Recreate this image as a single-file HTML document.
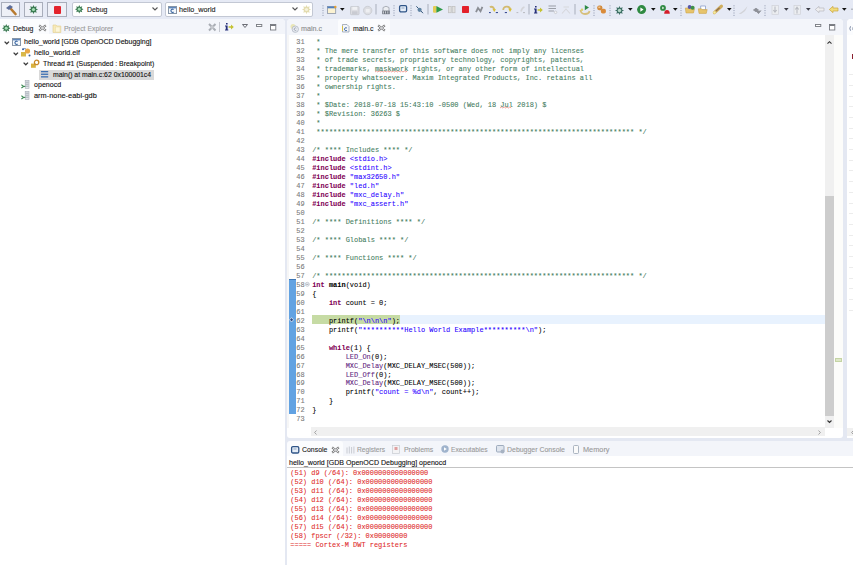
<!DOCTYPE html><html><head><meta charset="utf-8"><style>
*{margin:0;padding:0;box-sizing:border-box}
html,body{width:853px;height:565px;overflow:hidden}
body{position:relative;background:#e4e8f2;font-family:"Liberation Sans",sans-serif;font-size:8px;color:#1a1a1a}
.a{position:absolute}
.t{position:absolute;white-space:pre;line-height:10px;height:10px;transform-origin:0 0;-webkit-text-stroke:0.12px currentColor}
.m{position:absolute;white-space:pre;font-family:"Liberation Mono",monospace;font-size:6.97px;line-height:9px;height:9px;-webkit-text-stroke:0.08px currentColor}
.cm{color:#437c5e}
.kw{color:#7f0055;font-weight:bold}
.st{color:#2a00ff}
.fn{color:#642880}
.ln{color:#787878}
svg{overflow:visible}
</style></head><body>
<div class="a" style="left:0px;top:0px;width:853px;height:19px;background:#e6eaf5;"></div>
<div class="a" style="left:1px;top:2px;width:19px;height:15px;background:#eef0f7;border:1px solid #a9aebb"></div>
<div class="a" style="left:24px;top:2px;width:19px;height:15px;background:#eef0f7;border:1px solid #a9aebb"></div>
<div class="a" style="left:47px;top:2px;width:20px;height:15px;background:#eef0f7;border:1px solid #a9aebb"></div>
<svg class="a" style="left:4px;top:3px;" width="12" height="12" viewBox="0 0 12 12"><path d="M7 6 L11.5 11" stroke="#b87a30" stroke-width="2.6" stroke-linecap="round"/><path d="M2 5 L6 2 L9 4 L5 7 Z" fill="#5d6e9a"/></svg>
<svg class="a" style="left:29px;top:5px;" width="9" height="9" viewBox="0 0 9 9"><polygon points="9.00,4.50 6.99,5.53 7.68,7.68 5.53,6.99 4.50,9.00 3.47,6.99 1.32,7.68 2.01,5.53 0.00,4.50 2.01,3.47 1.32,1.32 3.47,2.01 4.50,0.00 5.53,2.01 7.68,1.32 6.99,3.47" fill="#3b7a52"/><circle cx="4.5" cy="4.5" r="1.57" fill="#a5e0b5"/></svg>
<div class="a" style="left:54px;top:6px;width:7px;height:8px;background:#e3232c;border-radius:1px"></div>
<div class="a" style="left:72px;top:2px;width:90px;height:15px;background:#ffffff;border:1px solid #c3c8d4;border-radius:2px"></div>
<svg class="a" style="left:75px;top:5px;" width="8.5" height="8.5" viewBox="0 0 8.5 8.5"><polygon points="8.50,4.25 6.61,5.23 7.26,7.26 5.23,6.61 4.25,8.50 3.27,6.61 1.24,7.26 1.89,5.23 0.00,4.25 1.89,3.27 1.24,1.24 3.27,1.89 4.25,0.00 5.23,1.89 7.26,1.24 6.61,3.27" fill="#3b7a52"/><circle cx="4.25" cy="4.25" r="1.49" fill="#a5e0b5"/></svg>
<svg class="a" style="left:152px;top:7px;" width="6" height="4" viewBox="0 0 6 4"><path d="M0.5 0.5 L3 3 L5.5 0.5" stroke="#555" stroke-width="1.1" fill="none"/></svg>
<div class="a" style="left:165px;top:2px;width:148px;height:15px;background:#ffffff;border:1px solid #c3c8d4;border-radius:2px"></div>
<svg class="a" style="left:167.9px;top:5.5px;" width="9" height="8" viewBox="0 0 9 8"><rect x="0.5" y="0.5" width="8" height="7" fill="#f4f8fc" stroke="#8796a8"/><rect x="1" y="1" width="7" height="1.4" fill="#5f86bb"/><path d="M5.6 3.6 A1.6 1.6 0 1 0 5.6 6" stroke="#3d68a3" stroke-width="1.1" fill="none"/></svg>
<svg class="a" style="left:291.5px;top:7px;" width="6" height="4" viewBox="0 0 6 4"><path d="M0.5 0.5 L3 3 L5.5 0.5" stroke="#555" stroke-width="1.1" fill="none"/></svg>
<svg class="a" style="left:302px;top:5px;" width="9" height="9" viewBox="0 0 9 9"><polygon points="9.00,4.50 6.99,5.53 7.68,7.68 5.53,6.99 4.50,9.00 3.47,6.99 1.32,7.68 2.01,5.53 0.00,4.50 2.01,3.47 1.32,1.32 3.47,2.01 4.50,0.00 5.53,2.01 7.68,1.32 6.99,3.47" fill="#e3dcb0"/><circle cx="4.5" cy="4.5" r="1.57" fill="#f6f2dc"/></svg>
<svg class="a" style="left:321.6px;top:4.5px" width="2" height="10" viewBox="0 0 2 10"><rect x="0.5" y="0.3" width="1" height="1" fill="#8f97b0"/><rect x="0.5" y="2.7" width="1" height="1" fill="#8f97b0"/><rect x="0.5" y="5.1" width="1" height="1" fill="#8f97b0"/><rect x="0.5" y="7.5" width="1" height="1" fill="#8f97b0"/><rect x="0.5" y="9.9" width="1" height="1" fill="#8f97b0"/></svg>
<svg class="a" style="left:327px;top:6px" width="9.5" height="8" viewBox="0 0 9.5 8"><rect x="0.5" y="0.5" width="8.2" height="7" fill="#fbf2d2" stroke="#8a94a6" stroke-width="0.8"/><rect x="0.5" y="0.5" width="8.2" height="1.8" fill="#4f7fc0"/><circle cx="8.3" cy="1" r="1.2" fill="#e8a030"/></svg>
<svg class="a" style="left:340.3px;top:8px" width="5" height="3" viewBox="0 0 5 3"><path d="M0 0 H4.6 L2.3 2.7 Z" fill="#111"/></svg>
<svg class="a" style="left:349.5px;top:5.5px" width="9.5" height="9" viewBox="0 0 9.5 9"><rect x="0.5" y="0.5" width="8.5" height="8.2" rx="0.8" fill="#dcdde2" stroke="#c3c5cc" stroke-width="0.8"/><rect x="2.3" y="0.8" width="4.8" height="3" fill="#f0f1f4"/><rect x="2" y="5.3" width="5.5" height="3" fill="#c9cbd2"/></svg>
<svg class="a" style="left:363px;top:5.5px" width="9.5" height="9" viewBox="0 0 9.5 9"><circle cx="4.7" cy="4.5" r="4.2" fill="#dcdde2" stroke="#c7c9cf" stroke-width="0.8"/><rect x="2.7" y="3" width="4" height="3.5" fill="#eeeff2"/></svg>
<svg class="a" style="left:374.8px;top:4px" width="2" height="11" viewBox="0 0 2 11"><rect x="0.4" y="0" width="1.2" height="10.5" fill="#b3b8c6"/></svg>
<svg class="a" style="left:382.3px;top:5.3px" width="8" height="9.5" viewBox="0 0 8 9.5"><path d="M1 9 V2.5 Q4 0 7 2.5 V9" fill="#eceef2" stroke="#9aa0aa" stroke-width="0.8"/><rect x="0.3" y="5.6" width="7.4" height="3.6" fill="#6f7580"/><path d="M1.5 6.3 V8.6 M3.5 6.3 V8.6 M5.8 6.3 V8.6" stroke="#dfe2e6" stroke-width="0.8"/></svg>
<svg class="a" style="left:393.3px;top:4.5px" width="2" height="10" viewBox="0 0 2 10"><rect x="0.5" y="0.3" width="1" height="1" fill="#8f97b0"/><rect x="0.5" y="2.7" width="1" height="1" fill="#8f97b0"/><rect x="0.5" y="5.1" width="1" height="1" fill="#8f97b0"/><rect x="0.5" y="7.5" width="1" height="1" fill="#8f97b0"/><rect x="0.5" y="9.9" width="1" height="1" fill="#8f97b0"/></svg>
<svg class="a" style="left:398.9px;top:5.3px" width="8.2" height="8" viewBox="0 0 8.2 8"><rect x="0.6" y="0.6" width="7" height="6.3" rx="1.3" fill="#e6eef8" stroke="#2f5487" stroke-width="1.3"/><path d="M2.4 3 H5.5" stroke="#6a86ad" stroke-width="0.7"/></svg>
<svg class="a" style="left:409.9px;top:4.5px" width="2" height="10" viewBox="0 0 2 10"><rect x="0.5" y="0.3" width="1" height="1" fill="#8f97b0"/><rect x="0.5" y="2.7" width="1" height="1" fill="#8f97b0"/><rect x="0.5" y="5.1" width="1" height="1" fill="#8f97b0"/><rect x="0.5" y="7.5" width="1" height="1" fill="#8f97b0"/><rect x="0.5" y="9.9" width="1" height="1" fill="#8f97b0"/></svg>
<svg class="a" style="left:415.8px;top:5.8px" width="7.5" height="7.6" viewBox="0 0 7.5 7.6"><path d="M0.4 0.3 L7 7.2" stroke="#2d4f74" stroke-width="1"/><circle cx="3.6" cy="3.8" r="2.1" fill="#5f83a3"/></svg>
<svg class="a" style="left:426.9px;top:4px" width="2" height="11" viewBox="0 0 2 11"><rect x="0.4" y="0" width="1.2" height="10.5" fill="#b3b8c6"/></svg>
<svg class="a" style="left:433px;top:6px" width="10.2" height="7" viewBox="0 0 10.2 7"><rect x="0" y="0" width="3.6" height="6.8" rx="1" fill="#e4cc56"/><path d="M3.4 0 L10 3.4 L3.4 6.8 Z" fill="#2f9a48"/></svg>
<svg class="a" style="left:448.3px;top:6px" width="7.5" height="7" viewBox="0 0 7.5 7"><rect x="0.4" y="0.4" width="2.8" height="6.3" fill="#e1e1e1" stroke="#c2c2c2" stroke-width="0.8"/><rect x="4.2" y="0.4" width="2.8" height="6.3" fill="#e1e1e1" stroke="#c2c2c2" stroke-width="0.8"/></svg>
<svg class="a" style="left:462px;top:6px" width="7.2" height="7" viewBox="0 0 7.2 7"><rect x="0" y="0" width="7" height="7" rx="0.8" fill="#e3202a"/></svg>
<svg class="a" style="left:475px;top:6px" width="8.3" height="7.2" viewBox="0 0 8.3 7.2"><path d="M1 6.2 L3 2 L5.5 5.3 L7.4 0.8" stroke="#8a8d94" stroke-width="1.8" fill="none"/></svg>
<svg class="a" style="left:488.5px;top:6px" width="9.3" height="7.4" viewBox="0 0 9.3 7.4"><path d="M0.8 1 Q4 -0.2 5.4 3.5" stroke="#d2ba70" stroke-width="1.8" fill="none"/><path d="M3.5 3 L7 3.2 L5.2 6 Z" fill="#d9c030"/><rect x="0" y="6.1" width="1.8" height="1" fill="#2b3f8a"/><rect x="6.8" y="6.1" width="2.2" height="1" fill="#2b3f8a"/></svg>
<svg class="a" style="left:502px;top:6px" width="10.2" height="7.4" viewBox="0 0 10.2 7.4"><path d="M1.2 4 Q1.5 0.3 5 0.6 Q8 0.8 8.2 3.4" stroke="#d2ba70" stroke-width="1.8" fill="none"/><path d="M6.3 2.6 L10 2.8 L8 6 Z" fill="#d9c030"/><rect x="2.8" y="6.1" width="2.2" height="1" fill="#2b3f8a"/></svg>
<svg class="a" style="left:516px;top:6px" width="9.5" height="7.4" viewBox="0 0 9.5 7.4"><path d="M5 5.5 Q6 1.5 8.5 1" stroke="#d4d5d9" stroke-width="1.6" fill="none"/><rect x="0.5" y="6.1" width="1.8" height="1" fill="#b9bbc1"/><rect x="7" y="6.1" width="2" height="1" fill="#b9bbc1"/></svg>
<svg class="a" style="left:528px;top:4px" width="2" height="11" viewBox="0 0 2 11"><rect x="0.4" y="0" width="1.2" height="10.5" fill="#b3b8c6"/></svg>
<svg class="a" style="left:534.3px;top:5.8px" width="9" height="7.6" viewBox="0 0 9 7.6"><rect x="1" y="0" width="1.6" height="1.5" fill="#26307a"/><path d="M0 2.6 H2.6 V6.4 H3.3 V7.4 H0 V6.4 H0.8 V3.5 H0 Z" fill="#26307a"/><path d="M3.6 3.3 H6 V1.5 L8.8 4 L6 6.5 V4.7 H3.6 Z" fill="#c5c231"/></svg>
<svg class="a" style="left:548.2px;top:5px" width="9.5" height="8.8" viewBox="0 0 9.5 8.8"><path d="M0.5 1 H8 M0.5 3.5 H8 M0.5 6 H6" stroke="#9a9ea6" stroke-width="1"/><circle cx="7.6" cy="7.3" r="1.3" fill="#f5f5f5" stroke="#b8bbc2" stroke-width="0.6"/></svg>
<svg class="a" style="left:561.2px;top:5.5px" width="10" height="8" viewBox="0 0 10 8"><path d="M1 7.5 L5 3 L9 7.5 M2.5 1 L8 1" stroke="#d6d7dc" stroke-width="1.1" fill="none"/></svg>
<svg class="a" style="left:573.9px;top:4px" width="2" height="11" viewBox="0 0 2 11"><rect x="0.4" y="0" width="1.2" height="10.5" fill="#b3b8c6"/></svg>
<svg class="a" style="left:580.2px;top:5px" width="10" height="9.5" viewBox="0 0 10 9.5"><path d="M4.8 0 L9 2.6 L4.8 5.2 Z" fill="#2e8a45"/><path d="M0.5 5 Q1 9 5 9 Q9 9 9.5 6" stroke="#d6bf7c" stroke-width="1.8" fill="none"/><circle cx="2" cy="4.8" r="1.2" fill="#dcd16a"/></svg>
<svg class="a" style="left:592.6px;top:4.5px" width="2" height="10" viewBox="0 0 2 10"><rect x="0.5" y="0.3" width="1" height="1" fill="#8f97b0"/><rect x="0.5" y="2.7" width="1" height="1" fill="#8f97b0"/><rect x="0.5" y="5.1" width="1" height="1" fill="#8f97b0"/><rect x="0.5" y="7.5" width="1" height="1" fill="#8f97b0"/><rect x="0.5" y="9.9" width="1" height="1" fill="#8f97b0"/></svg>
<svg class="a" style="left:597.1px;top:4.9px" width="9.4" height="9" viewBox="0 0 9.4 9"><rect x="0.3" y="0.5" width="5" height="4.8" rx="1.8" fill="#d28a3c"/><rect x="3.9" y="3.8" width="5" height="4.8" rx="1.8" fill="#d98b3a"/><rect x="1.3" y="1.5" width="2" height="1.6" fill="#f0c690"/></svg>
<svg class="a" style="left:609.1px;top:4.5px" width="2" height="10" viewBox="0 0 2 10"><rect x="0.5" y="0.3" width="1" height="1" fill="#8f97b0"/><rect x="0.5" y="2.7" width="1" height="1" fill="#8f97b0"/><rect x="0.5" y="5.1" width="1" height="1" fill="#8f97b0"/><rect x="0.5" y="7.5" width="1" height="1" fill="#8f97b0"/><rect x="0.5" y="9.9" width="1" height="1" fill="#8f97b0"/></svg>
<svg class="a" style="left:615px;top:5.6px" width="9" height="9" viewBox="0 0 9 9"><polygon points="9.00,4.50 6.90,5.49 7.68,7.68 5.49,6.90 4.50,9.00 3.51,6.90 1.32,7.68 2.10,5.49 0.00,4.50 2.10,3.51 1.32,1.32 3.51,2.10 4.50,0.00 5.49,2.10 7.68,1.32 6.90,3.51" fill="#3c6e64"/><circle cx="4.5" cy="4.5" r="1.7" fill="#b5d9c9"/></svg>
<svg class="a" style="left:628.1px;top:8px" width="5" height="3" viewBox="0 0 5 3"><path d="M0 0 H4.6 L2.3 2.7 Z" fill="#111"/></svg>
<svg class="a" style="left:637.3px;top:4.6px" width="9.2" height="9.2" viewBox="0 0 9.2 9.2"><circle cx="4.6" cy="4.6" r="4.5" fill="#2f8a42"/><path d="M3.4 2.4 L6.6 4.6 L3.4 6.8 Z" fill="#ffffff"/></svg>
<svg class="a" style="left:650.9px;top:8px" width="5" height="3" viewBox="0 0 5 3"><path d="M0 0 H4.6 L2.3 2.7 Z" fill="#111"/></svg>
<svg class="a" style="left:659.9px;top:4.9px" width="10" height="9" viewBox="0 0 10 9"><circle cx="3" cy="2.9" r="2.9" fill="#2f8a42"/><path d="M2.3 1.6 L4.2 2.9 L2.3 4.2 Z" fill="#fff"/><path d="M4.2 8.8 Q4.2 5 7 5 Q9.8 5 9.8 8.8 Z" fill="#d41f2a"/></svg>
<svg class="a" style="left:673.3px;top:8px" width="5" height="3" viewBox="0 0 5 3"><path d="M0 0 H4.6 L2.3 2.7 Z" fill="#111"/></svg>
<svg class="a" style="left:680.4px;top:4.5px" width="2" height="10" viewBox="0 0 2 10"><rect x="0.5" y="0.3" width="1" height="1" fill="#8f97b0"/><rect x="0.5" y="2.7" width="1" height="1" fill="#8f97b0"/><rect x="0.5" y="5.1" width="1" height="1" fill="#8f97b0"/><rect x="0.5" y="7.5" width="1" height="1" fill="#8f97b0"/><rect x="0.5" y="9.9" width="1" height="1" fill="#8f97b0"/></svg>
<svg class="a" style="left:685px;top:5.3px" width="10" height="8.3" viewBox="0 0 10 8.3"><path d="M0.3 3 H4 L4.8 3.8 H9.5 L8.5 8 H1 Z" fill="#e7c46c" stroke="#c79b3c" stroke-width="0.5"/><circle cx="4.6" cy="2" r="1.9" fill="#5657a8"/><circle cx="7.6" cy="2.8" r="2" fill="#3d9048"/></svg>
<svg class="a" style="left:698.3px;top:6px" width="9.6" height="7.6" viewBox="0 0 9.6 7.6"><rect x="2.8" y="0" width="4.5" height="4" fill="#fff" stroke="#6a82b8" stroke-width="0.6"/><path d="M0.3 2.8 H3.5 L4.2 3.6 H9.2 L8.3 7.4 H1 Z" fill="#e7c46c" stroke="#c79b3c" stroke-width="0.5"/></svg>
<svg class="a" style="left:712.8px;top:4.9px" width="10" height="9" viewBox="0 0 10 9"><path d="M1.4 7.6 L8.4 1.2" stroke="#cfae5f" stroke-width="3.2" stroke-linecap="round"/><path d="M3 6 L6.6 2.8" stroke="#8f6e4c" stroke-width="1.2"/><circle cx="1.5" cy="7.5" r="1.3" fill="#f7ec9f"/></svg>
<svg class="a" style="left:726.7px;top:8px" width="5" height="3" viewBox="0 0 5 3"><path d="M0 0 H4.6 L2.3 2.7 Z" fill="#111"/></svg>
<svg class="a" style="left:733.4px;top:4.5px" width="2" height="10" viewBox="0 0 2 10"><rect x="0.5" y="0.3" width="1" height="1" fill="#8f97b0"/><rect x="0.5" y="2.7" width="1" height="1" fill="#8f97b0"/><rect x="0.5" y="5.1" width="1" height="1" fill="#8f97b0"/><rect x="0.5" y="7.5" width="1" height="1" fill="#8f97b0"/><rect x="0.5" y="9.9" width="1" height="1" fill="#8f97b0"/></svg>
<svg class="a" style="left:738.3px;top:5.6px" width="10" height="8.3" viewBox="0 0 10 8.3"><path d="M0.6 7.8 Q5 6 9.3 0.3 Q8.5 5 3 8 Z" fill="#d2d3d8"/></svg>
<svg class="a" style="left:753.1px;top:7.5px" width="8.4" height="6" viewBox="0 0 8.4 6"><path d="M0.5 2 L3 0.3 L5.5 2 L3 3.7 Z M3 3 L5.5 5.6 L8 2.6" fill="#8d9097" stroke="#8d9097" stroke-width="0.9"/></svg>
<svg class="a" style="left:764.3px;top:4.5px" width="2" height="10" viewBox="0 0 2 10"><rect x="0.5" y="0.3" width="1" height="1" fill="#8f97b0"/><rect x="0.5" y="2.7" width="1" height="1" fill="#8f97b0"/><rect x="0.5" y="5.1" width="1" height="1" fill="#8f97b0"/><rect x="0.5" y="7.5" width="1" height="1" fill="#8f97b0"/><rect x="0.5" y="9.9" width="1" height="1" fill="#8f97b0"/></svg>
<svg class="a" style="left:770.5px;top:5px" width="8" height="9.5" viewBox="0 0 8 9.5"><rect x="1" y="0.5" width="6.5" height="8.8" fill="#eceef1" stroke="#cfd2d8" stroke-width="0.7"/><path d="M4 1.5 V7 M2.3 5 L4 7.2 L5.7 5" stroke="#b9bcc3" stroke-width="1.1" fill="none"/></svg>
<svg class="a" style="left:783.5px;top:8px" width="5" height="3" viewBox="0 0 5 3"><path d="M0 0 H4.6 L2.3 2.7 Z" fill="#3a3a44"/></svg>
<svg class="a" style="left:792.7px;top:5px" width="8.4" height="9.5" viewBox="0 0 8.4 9.5"><rect x="1" y="0.5" width="6.5" height="8.8" fill="#eceef1" stroke="#cfd2d8" stroke-width="0.7"/><path d="M4 8.5 V2.5 M2.3 4.5 L4 2.2 L5.7 4.5" stroke="#b9bcc3" stroke-width="1.1" fill="none"/></svg>
<svg class="a" style="left:805.7px;top:8px" width="5" height="3" viewBox="0 0 5 3"><path d="M0 0 H4.6 L2.3 2.7 Z" fill="#3a3a44"/></svg>
<svg class="a" style="left:814.5px;top:6px" width="9.3" height="7" viewBox="0 0 9.3 7"><path d="M0.3 3.5 L4 0.3 V2 H9 V5 H4 V6.7 Z" fill="#eeeef0" stroke="#b7b8be" stroke-width="0.7"/></svg>
<svg class="a" style="left:828.9px;top:6px" width="9.3" height="7" viewBox="0 0 9.3 7"><path d="M0.3 3.5 L4 0.3 V2 H9 V5 H4 V6.7 Z" fill="#f1dc7a" stroke="#caa540" stroke-width="0.7"/></svg>
<svg class="a" style="left:842.1px;top:8px" width="5" height="3" viewBox="0 0 5 3"><path d="M0 0 H4.6 L2.3 2.7 Z" fill="#111"/></svg>
<svg class="a" style="left:850.5px;top:8px" width="3" height="3" viewBox="0 0 3 3"><rect x="0" y="0.5" width="3" height="1.5" fill="#b8bcc6"/></svg>
<div class="a" style="left:0px;top:19px;width:285px;height:546px;background:#fff;border-radius:0 4px 0 0"></div>
<div class="a" style="left:0px;top:19px;width:285px;height:15px;background:#f3f5fa;border-radius:0 4px 0 0"></div>
<div class="a" style="left:0px;top:19px;width:49px;height:15px;background:#fbfcfe;border-radius:0 3px 0 0"></div>
<div class="a" style="left:287px;top:19px;width:556px;height:419px;background:#fff;border-radius:4px 4px 3px 3px"></div>
<div class="a" style="left:287px;top:19px;width:556px;height:16px;background:#f3f5fa;border-radius:4px 4px 0 0"></div>
<div class="a" style="left:338px;top:19px;width:52px;height:16px;background:#fbfcfe;border-radius:3px 3px 0 0"></div>
<div class="a" style="left:847px;top:19px;width:10px;height:419px;background:#fff;border-radius:4px 0 0 0"></div>
<div class="a" style="left:847px;top:19px;width:10px;height:16px;background:#fbfcfe;border-radius:4px 0 0 0"></div>
<div class="a" style="left:287px;top:441px;width:570px;height:124px;background:#fff;border-radius:4px 0 0 0"></div>
<div class="a" style="left:287px;top:441px;width:570px;height:15px;background:#f3f5fa;border-radius:4px 0 0 0"></div>
<div class="a" style="left:287px;top:441px;width:56px;height:15px;background:#fbfcfe;border-radius:4px 3px 0 0"></div>
<svg class="a" style="left:38.7px;top:25.3px;" width="7" height="6" viewBox="0 0 7 6"><path d="M1 1 L6 5 M6 1 L1 5" stroke="#707070" stroke-width="2.1" stroke-linecap="square"/><path d="M1 1 L6 5 M6 1 L1 5" stroke="#f6f7fa" stroke-width="0.9" stroke-linecap="square"/></svg>
<svg class="a" style="left:52px;top:23.6px;" width="9.5" height="9" viewBox="0 0 9.5 9"><path d="M1 1 H4 L5 2 H8.8 V8.5 H1 Z" fill="#f8eab8" stroke="#e0cd8e" stroke-width="0.6"/><rect x="3.5" y="3" width="4.5" height="5" fill="#fdf6da" stroke="#e6d9a8" stroke-width="0.5"/></svg>
<svg class="a" style="left:207.6px;top:22.5px;" width="8.5" height="8.5" viewBox="0 0 8.5 8.5"><path d="M1 1 L7.5 7.5 M7.5 1 L1 7.5" stroke="#a9adb4" stroke-width="2"/><circle cx="4.2" cy="4.2" r="1.8" fill="#c5c8ce"/></svg>
<div class="a" style="left:219.3px;top:22px;width:1px;height:10px;background:#c5c8d0;"></div>
<svg class="a" style="left:224.6px;top:22.8px;" width="9.5" height="7.6" viewBox="0 0 9.5 7.6"><rect x="1" y="0" width="1.6" height="1.5" fill="#26307a"/><path d="M0 2.6 H2.6 V6.4 H3.3 V7.4 H0 V6.4 H0.8 V3.5 H0 Z" fill="#26307a"/><path d="M3.6 3.3 H6 V1.5 L8.8 4 L6 6.5 V4.7 H3.6 Z" fill="#c5c231"/></svg>
<svg class="a" style="left:242.2px;top:24.2px;" width="6" height="4" viewBox="0 0 6 4"><path d="M0.5 0.5 H5.5 L3 3.5 Z" fill="none" stroke="#5c5f66" stroke-width="0.9"/></svg>
<svg class="a" style="left:255.9px;top:24.3px;" width="6.3" height="3" viewBox="0 0 6.3 3"><rect x="0.5" y="0.5" width="5.3" height="2" fill="#fff" stroke="#777a80" stroke-width="0.9"/></svg>
<svg class="a" style="left:269.6px;top:24.3px;" width="6.3" height="6.5" viewBox="0 0 6.3 6.5"><rect x="0.5" y="0.5" width="5.3" height="5.5" fill="#fff" stroke="#777a80" stroke-width="0.9"/><rect x="0.5" y="0.5" width="5.3" height="1.5" fill="#777a80"/></svg>
<svg class="a" style="left:815.3px;top:24.4px;" width="6.3" height="3" viewBox="0 0 6.3 3"><rect x="0.5" y="0.5" width="5.3" height="2" fill="#fff" stroke="#777a80" stroke-width="0.9"/></svg>
<svg class="a" style="left:829px;top:24.4px;" width="6.3" height="6.5" viewBox="0 0 6.3 6.5"><rect x="0.5" y="0.5" width="5.3" height="5.5" fill="#fff" stroke="#777a80" stroke-width="0.9"/><rect x="0.5" y="0.5" width="5.3" height="1.5" fill="#777a80"/></svg>
<svg class="a" style="left:377.8px;top:25.3px;" width="7" height="6" viewBox="0 0 7 6"><path d="M1 1 L6 5 M6 1 L1 5" stroke="#707070" stroke-width="2.1" stroke-linecap="square"/><path d="M1 1 L6 5 M6 1 L1 5" stroke="#f6f7fa" stroke-width="0.9" stroke-linecap="square"/></svg>
<svg class="a" style="left:289.8px;top:23.8px;" width="9.5" height="8.5" viewBox="0 0 9.5 8.5"><circle cx="3" cy="2.6" r="2.5" fill="#e6e2a8" opacity="0.8"/><circle cx="5.3" cy="5.2" r="3.2" fill="#e9ecf2" stroke="#a9b0bd" stroke-width="0.7"/><path d="M6.3 4.2 A1.3 1.3 0 1 0 6.3 6.2" stroke="#8e97a6" stroke-width="0.8" fill="none"/></svg>
<svg class="a" style="left:342.4px;top:23.8px;" width="7.5" height="8.5" viewBox="0 0 7.5 8.5"><path d="M0.5 0.5 H5 L7 2.5 V8 H0.5 Z" fill="#f4f6fa" stroke="#8b96a6" stroke-width="0.7"/><path d="M4.9 4 A1.5 1.5 0 1 0 4.9 6.4" stroke="#3d68a3" stroke-width="1" fill="none"/><rect x="0" y="2" width="1" height="5" fill="#d8c048"/></svg>
<svg class="a" style="left:291px;top:445.6px;" width="8.4" height="7.8" viewBox="0 0 8.4 7.8"><rect x="0.6" y="0.6" width="7.2" height="6.4" rx="1.3" fill="#e6eef8" stroke="#2f5487" stroke-width="1.3"/><path d="M2.4 3 H5.5" stroke="#6a86ad" stroke-width="0.7"/></svg>
<svg class="a" style="left:332px;top:446.7px;" width="7" height="6" viewBox="0 0 7 6"><path d="M1 1 L6 5 M6 1 L1 5" stroke="#707070" stroke-width="2.1" stroke-linecap="square"/><path d="M1 1 L6 5 M6 1 L1 5" stroke="#f6f7fa" stroke-width="0.9" stroke-linecap="square"/></svg>
<svg class="a" style="left:345.8px;top:445.5px;" width="9" height="8" viewBox="0 0 9 8"><path d="M1 1.5 V7.5 M3.3 0.5 V7.5 M5.6 1 V7.5 M7.9 0.5 V7.5" stroke="#c4c7ce" stroke-width="0.9"/></svg>
<svg class="a" style="left:391.5px;top:445px;" width="8" height="9" viewBox="0 0 8 9"><rect x="0.5" y="0.5" width="7" height="8" fill="#f3f3f5" stroke="#c7cad0" stroke-width="0.7"/><rect x="2.5" y="2" width="3" height="3" fill="#e0a0a0"/></svg>
<svg class="a" style="left:440.8px;top:445.3px;" width="8" height="8" viewBox="0 0 8 8"><circle cx="4" cy="4" r="3.7" fill="#9fb3cc"/><path d="M3 2.2 L5.8 4 L3 5.8 Z" fill="#fff"/></svg>
<svg class="a" style="left:495.8px;top:445.3px;" width="9" height="8.5" viewBox="0 0 9 8.5"><rect x="0.5" y="0.5" width="7.5" height="6.5" rx="1" fill="#dfe5ee" stroke="#8c9bb0" stroke-width="0.8"/><circle cx="6.5" cy="6.5" r="2" fill="#a6b2c2"/></svg>
<svg class="a" style="left:573px;top:445px;" width="6" height="9" viewBox="0 0 6 9"><rect x="0.5" y="0.5" width="5" height="8" rx="1" fill="#fafafa" stroke="#98a3b3" stroke-width="0.8"/></svg>
<svg class="a" style="left:2px;top:24px;" width="8.5" height="8.5" viewBox="0 0 8.5 8.5"><polygon points="8.50,4.25 6.61,5.23 7.26,7.26 5.23,6.61 4.25,8.50 3.27,6.61 1.24,7.26 1.89,5.23 0.00,4.25 1.89,3.27 1.24,1.24 3.27,1.89 4.25,0.00 5.23,1.89 7.26,1.24 6.61,3.27" fill="#3b7a52"/><circle cx="4.25" cy="4.25" r="1.49" fill="#a5e0b5"/></svg>
<div class="a" style="left:39px;top:69.5px;width:115px;height:10px;background:#d9d9d9;"></div>
<svg class="a" style="left:3.6px;top:40.8px;" width="6" height="4" viewBox="0 0 6 4"><path d="M0.6 0.6 L2.8 2.8 L5 0.6" stroke="#3a3a3a" stroke-width="1.3" fill="none"/></svg>
<svg class="a" style="left:13.2px;top:51.5px;" width="6" height="4" viewBox="0 0 6 4"><path d="M0.6 0.6 L2.8 2.8 L5 0.6" stroke="#3a3a3a" stroke-width="1.3" fill="none"/></svg>
<svg class="a" style="left:23.1px;top:62.1px;" width="6" height="4" viewBox="0 0 6 4"><path d="M0.6 0.6 L2.8 2.8 L5 0.6" stroke="#3a3a3a" stroke-width="1.3" fill="none"/></svg>
<svg class="a" style="left:12px;top:38px;" width="9" height="8" viewBox="0 0 9 8"><rect x="0.5" y="0.5" width="8" height="7" fill="#f4f8fc" stroke="#8796a8"/><rect x="1" y="1" width="7" height="1.4" fill="#5f86bb"/><path d="M5.6 3.6 A1.6 1.6 0 1 0 5.6 6" stroke="#3d68a3" stroke-width="1.1" fill="none"/></svg>
<svg class="a" style="left:21px;top:48.4px;" width="10" height="9" viewBox="0 0 10 9"><rect x="0" y="4" width="5" height="4.5" fill="#d8b84a"/><circle cx="6.5" cy="3" r="2.6" fill="#e8a848"/><circle cx="2" cy="1.2" r="1" fill="#3a5f9c"/><circle cx="8.5" cy="7.6" r="1" fill="#3a5f9c"/><path d="M2 1.2 Q4 0 5 1" stroke="#3a5f9c" stroke-width="0.7" fill="none"/></svg>
<svg class="a" style="left:31px;top:59.6px;" width="9" height="8" viewBox="0 0 9 8"><rect x="0" y="3.6" width="4.8" height="4.2" fill="#d9b240"/><circle cx="5.6" cy="2.4" r="2.2" fill="none" stroke="#c98a2a" stroke-width="1.3"/></svg>
<svg class="a" style="left:41px;top:70.5px;" width="7.5" height="7" viewBox="0 0 7.5 7"><rect x="0" y="0" width="7.2" height="1.3" fill="#3c6fb2"/><rect x="0" y="2.6" width="7.2" height="1.3" fill="#3c6fb2"/><rect x="0" y="5.2" width="7.2" height="1.3" fill="#3c6fb2"/></svg>
<svg class="a" style="left:21px;top:80.4px;" width="9" height="9" viewBox="0 0 9 9"><rect x="4.2" y="0.3" width="3.8" height="8" fill="#e3e6ea" stroke="#a4abb4" stroke-width="0.6"/><path d="M4.6 2.2 H7.6 M4.6 4.2 H7.6 M4.6 6.2 H7.6" stroke="#8d96a0" stroke-width="0.7"/><path d="M0.4 4.8 L2.6 6.4 L0.4 8" stroke="#3e8a55" stroke-width="1.1" fill="none"/><path d="M2.4 6.4 H4.3" stroke="#3e8a55" stroke-width="1.1"/></svg>
<svg class="a" style="left:21px;top:91.4px;" width="9" height="9" viewBox="0 0 9 9"><rect x="4.2" y="0.3" width="3.8" height="8" fill="#e3e6ea" stroke="#a4abb4" stroke-width="0.6"/><path d="M4.6 2.2 H7.6 M4.6 4.2 H7.6 M4.6 6.2 H7.6" stroke="#8d96a0" stroke-width="0.7"/><path d="M0.4 4.8 L2.6 6.4 L0.4 8" stroke="#3e8a55" stroke-width="1.1" fill="none"/><path d="M2.4 6.4 H4.3" stroke="#3e8a55" stroke-width="1.1"/></svg>
<div class="a" style="left:312px;top:315.18px;width:513px;height:8.98px;background:#e8f2fe;"></div>
<div class="a" style="left:312px;top:315.18px;width:88px;height:8.98px;background:#c6dba4;"></div>
<div class="a" style="left:287px;top:35px;width:2px;height:393px;background:#f6f6f6;"></div>
<div class="a" style="left:289px;top:279px;width:7px;height:134.5px;background:#62a2e2;"></div>
<div class="a" style="left:289px;top:279px;width:7px;height:1px;background:#3f77b5;"></div>
<svg class="a" style="left:304.8px;top:281.6px;" width="4.6" height="4.6" viewBox="0 0 4.6 4.6"><circle cx="2.3" cy="2.3" r="2" fill="#f2f4f7" stroke="#a8b0bc" stroke-width="0.6"/><path d="M1.2 2.3 H3.4" stroke="#6b7583" stroke-width="0.6"/></svg>
<svg class="a" style="left:288.8px;top:317px;" width="5" height="5.6" viewBox="0 0 5 5.6"><path d="M0.6 2.8 L2.6 0.6 L4.5 2.8 L2.6 5 Z" fill="#2a4c8a" stroke="#fff" stroke-width="0.7"/></svg>
<svg class="a" style="left:374.9px;top:71.34px;" width="33.44" height="1.5" viewBox="0 0 33.44 1.5"><path d="M0 1 L1.4 0 L2.8 1 L4.2 0 L5.6 1 L7.0 0 L8.4 1 L9.8 0 L11.2 1 L12.6 0 L14.0 1 L15.4 0 L16.8 1 L18.2 0 L19.6 1 L21.0 0 L22.4 1 L23.8 0 L25.2 1 L26.6 0 L28.0 1 L29.4 0 L30.8 1 L32.2 0" stroke="#e86a5a" stroke-width="0.6" fill="none"/></svg>
<svg class="a" style="left:500.29999999999995px;top:107.26px;" width="12.54" height="1.5" viewBox="0 0 12.54 1.5"><path d="M0 1 L1.4 0 L2.8 1 L4.2 0 L5.6 1 L7.0 0 L8.4 1 L9.8 0 L11.2 1" stroke="#e86a5a" stroke-width="0.6" fill="none"/></svg>
<style>.a b{font-weight:bold}</style>
<div class="m ln" style="left:296.3px;top:38.2px">31</div>
<div class="m ln" style="left:296.3px;top:47.2px">32</div>
<div class="m ln" style="left:296.3px;top:56.2px">33</div>
<div class="m ln" style="left:296.3px;top:65.1px">34</div>
<div class="m ln" style="left:296.3px;top:74.1px">35</div>
<div class="m ln" style="left:296.3px;top:83.1px">36</div>
<div class="m ln" style="left:296.3px;top:92.1px">37</div>
<div class="m ln" style="left:296.3px;top:101.1px">38</div>
<div class="m ln" style="left:296.3px;top:110.0px">39</div>
<div class="m ln" style="left:296.3px;top:119.0px">40</div>
<div class="m ln" style="left:296.3px;top:128.0px">41</div>
<div class="m ln" style="left:296.3px;top:137.0px">42</div>
<div class="m ln" style="left:296.3px;top:146.0px">43</div>
<div class="m ln" style="left:296.3px;top:154.9px">44</div>
<div class="m ln" style="left:296.3px;top:163.9px">45</div>
<div class="m ln" style="left:296.3px;top:172.9px">46</div>
<div class="m ln" style="left:296.3px;top:181.9px">47</div>
<div class="m ln" style="left:296.3px;top:190.9px">48</div>
<div class="m ln" style="left:296.3px;top:199.8px">49</div>
<div class="m ln" style="left:296.3px;top:208.8px">50</div>
<div class="m ln" style="left:296.3px;top:217.8px">51</div>
<div class="m ln" style="left:296.3px;top:226.8px">52</div>
<div class="m ln" style="left:296.3px;top:235.8px">53</div>
<div class="m ln" style="left:296.3px;top:244.7px">54</div>
<div class="m ln" style="left:296.3px;top:253.7px">55</div>
<div class="m ln" style="left:296.3px;top:262.7px">56</div>
<div class="m ln" style="left:296.3px;top:271.7px">57</div>
<div class="m ln" style="left:296.3px;top:280.7px">58</div>
<div class="m ln" style="left:296.3px;top:289.6px">59</div>
<div class="m ln" style="left:296.3px;top:298.6px">60</div>
<div class="m ln" style="left:296.3px;top:307.6px">61</div>
<div class="m ln" style="left:296.3px;top:316.6px">62</div>
<div class="m ln" style="left:296.3px;top:325.6px">63</div>
<div class="m ln" style="left:296.3px;top:334.5px">64</div>
<div class="m ln" style="left:296.3px;top:343.5px">65</div>
<div class="m ln" style="left:296.3px;top:352.5px">66</div>
<div class="m ln" style="left:296.3px;top:361.5px">67</div>
<div class="m ln" style="left:296.3px;top:370.5px">68</div>
<div class="m ln" style="left:296.3px;top:379.4px">69</div>
<div class="m ln" style="left:296.3px;top:388.4px">70</div>
<div class="m ln" style="left:296.3px;top:397.4px">71</div>
<div class="m ln" style="left:296.3px;top:406.4px">72</div>
<div class="m ln" style="left:296.3px;top:415.4px">73</div>
<div class="m" style="left:312.2px;top:38.2px;color:#000"><span class="cm"> *</span></div>
<div class="m" style="left:312.2px;top:47.2px;color:#000"><span class="cm"> * The mere transfer of this software does not imply any licenses</span></div>
<div class="m" style="left:312.2px;top:56.2px;color:#000"><span class="cm"> * of trade secrets, proprietary technology, copyrights, patents,</span></div>
<div class="m" style="left:312.2px;top:65.1px;color:#000"><span class="cm"> * trademarks, maskwork rights, or any other form of intellectual</span></div>
<div class="m" style="left:312.2px;top:74.1px;color:#000"><span class="cm"> * property whatsoever. Maxim Integrated Products, Inc. retains all</span></div>
<div class="m" style="left:312.2px;top:83.1px;color:#000"><span class="cm"> * ownership rights.</span></div>
<div class="m" style="left:312.2px;top:92.1px;color:#000"><span class="cm"> *</span></div>
<div class="m" style="left:312.2px;top:101.1px;color:#000"><span class="cm"> * $Date: 2018-07-18 15:43:10 -0500 (Wed, 18 Jul 2018) $</span></div>
<div class="m" style="left:312.2px;top:110.0px;color:#000"><span class="cm"> * $Revision: 36263 $</span></div>
<div class="m" style="left:312.2px;top:119.0px;color:#000"><span class="cm"> *</span></div>
<div class="m" style="left:312.2px;top:128.0px;color:#000"><span class="cm"> **************************************************************************** */</span></div>
<div class="m" style="left:312.2px;top:146.0px;color:#000"><span class="cm">/* **** Includes **** */</span></div>
<div class="m" style="left:312.2px;top:154.9px;color:#000"><span class="kw">#include</span> <span class="st">&lt;stdio.h&gt;</span></div>
<div class="m" style="left:312.2px;top:163.9px;color:#000"><span class="kw">#include</span> <span class="st">&lt;stdint.h&gt;</span></div>
<div class="m" style="left:312.2px;top:172.9px;color:#000"><span class="kw">#include</span> <span class="st">"max32650.h"</span></div>
<div class="m" style="left:312.2px;top:181.9px;color:#000"><span class="kw">#include</span> <span class="st">"led.h"</span></div>
<div class="m" style="left:312.2px;top:190.9px;color:#000"><span class="kw">#include</span> <span class="st">"mxc_delay.h"</span></div>
<div class="m" style="left:312.2px;top:199.8px;color:#000"><span class="kw">#include</span> <span class="st">"mxc_assert.h"</span></div>
<div class="m" style="left:312.2px;top:217.8px;color:#000"><span class="cm">/* **** Definitions **** */</span></div>
<div class="m" style="left:312.2px;top:235.8px;color:#000"><span class="cm">/* **** Globals **** */</span></div>
<div class="m" style="left:312.2px;top:253.7px;color:#000"><span class="cm">/* **** Functions **** */</span></div>
<div class="m" style="left:312.2px;top:271.7px;color:#000"><span class="cm">/* ************************************************************************** */</span></div>
<div class="m" style="left:312.2px;top:280.7px;color:#000"><span class="kw">int</span> <b>main</b>(void)</div>
<div class="m" style="left:312.2px;top:289.6px;color:#000">{</div>
<div class="m" style="left:312.2px;top:298.6px;color:#000">    <span class="kw">int</span> count = 0;</div>
<div class="m" style="left:312.2px;top:316.6px;color:#000">    printf(<span class="st">"\n\n\n"</span>);</div>
<div class="m" style="left:312.2px;top:325.6px;color:#000">    printf(<span class="st">"**********Hello World Example**********\n"</span>);</div>
<div class="m" style="left:312.2px;top:343.5px;color:#000">    <span class="kw">while</span>(1) {</div>
<div class="m" style="left:312.2px;top:352.5px;color:#000">        <span class="fn">LED_On</span>(0);</div>
<div class="m" style="left:312.2px;top:361.5px;color:#000">        <span class="fn">MXC_Delay</span>(MXC_DELAY_MSEC(500));</div>
<div class="m" style="left:312.2px;top:370.5px;color:#000">        <span class="fn">LED_Off</span>(0);</div>
<div class="m" style="left:312.2px;top:379.4px;color:#000">        <span class="fn">MXC_Delay</span>(MXC_DELAY_MSEC(500));</div>
<div class="m" style="left:312.2px;top:388.4px;color:#000">        printf(<span class="st">"count = %d\n"</span>, count++);</div>
<div class="m" style="left:312.2px;top:397.4px;color:#000">    }</div>
<div class="m" style="left:312.2px;top:406.4px;color:#000">}</div>
<div class="a" style="left:825px;top:35px;width:9px;height:393px;background:#f0f0f0;"></div>
<div class="a" style="left:825px;top:196px;width:9px;height:220px;background:#cdcdcd;"></div>
<div class="a" style="left:311px;top:427px;width:514px;height:9px;background:#f0f0f0;"></div>
<div class="a" style="left:834px;top:35px;width:9px;height:393px;background:#fcfcfa;"></div>
<div class="a" style="left:835px;top:358.4px;width:6.5px;height:3.5px;background:#dfe8c8;border:0.6px solid #c4d4a4"></div>
<svg class="a" style="left:827.3px;top:40.5px;" width="5" height="3.2" viewBox="0 0 5 3.2"><path d="M0.5 2.7 L2.5 0.7 L4.5 2.7" stroke="#333" stroke-width="1.1" fill="none"/></svg>
<svg class="a" style="left:827.3px;top:419.8px;" width="5" height="3.2" viewBox="0 0 5 3.2"><path d="M0.5 0.5 L2.5 2.5 L4.5 0.5" stroke="#333" stroke-width="1.1" fill="none"/></svg>
<svg class="a" style="left:313.5px;top:430px;" width="3" height="5" viewBox="0 0 3 5"><path d="M2.5 0.5 L0.6 2.5 L2.5 4.5" stroke="#999" stroke-width="0.9" fill="none"/></svg>
<svg class="a" style="left:818px;top:430px;" width="3" height="5" viewBox="0 0 3 5"><path d="M0.5 0.5 L2.4 2.5 L0.5 4.5" stroke="#999" stroke-width="0.9" fill="none"/></svg>
<div class="a" style="left:847px;top:35px;width:10px;height:1px;background:#fff;"></div>
<svg class="a" style="left:848.5px;top:25.5px;" width="6" height="5" viewBox="0 0 6 5"><path d="M1.5 0.3 Q0.2 2.5 1.5 4.7" stroke="#5a6b8c" stroke-width="0.8" fill="none"/><path d="M3 2 H6 M3 3.2 H6" stroke="#5a6b8c" stroke-width="0.6"/></svg>
<div class="a" style="left:851.5px;top:54px;width:3px;height:5px;background:#8a2030;"></div>
<div class="a" style="left:849px;top:74px;width:6px;height:1px;background:#ececec;"></div>
<div class="a" style="left:849px;top:85px;width:6px;height:1px;background:#ececec;"></div>
<div class="a" style="left:849px;top:96px;width:6px;height:1px;background:#ececec;"></div>
<div class="a" style="left:849px;top:106px;width:6px;height:1px;background:#ececec;"></div>
<div class="a" style="left:849px;top:117px;width:6px;height:1px;background:#ececec;"></div>
<div class="a" style="left:849px;top:128px;width:6px;height:1px;background:#ececec;"></div>
<div class="a" style="left:849px;top:138px;width:6px;height:1px;background:#ececec;"></div>
<div class="a" style="left:849px;top:149px;width:6px;height:1px;background:#ececec;"></div>
<div class="a" style="left:849px;top:160px;width:6px;height:1px;background:#ececec;"></div>
<div class="a" style="left:849px;top:170px;width:6px;height:1px;background:#ececec;"></div>
<div class="a" style="left:849px;top:181px;width:6px;height:1px;background:#ececec;"></div>
<div class="a" style="left:849px;top:192px;width:6px;height:1px;background:#ececec;"></div>
<div class="a" style="left:849px;top:203px;width:6px;height:1px;background:#ececec;"></div>
<div class="a" style="left:849px;top:213px;width:6px;height:1px;background:#ececec;"></div>
<div class="a" style="left:849px;top:224px;width:6px;height:1px;background:#ececec;"></div>
<div class="a" style="left:849px;top:235px;width:6px;height:1px;background:#ececec;"></div>
<div class="a" style="left:849px;top:245px;width:6px;height:1px;background:#ececec;"></div>
<div class="a" style="left:849px;top:256px;width:6px;height:1px;background:#ececec;"></div>
<div class="a" style="left:849px;top:267px;width:6px;height:1px;background:#ececec;"></div>
<div class="a" style="left:849px;top:278px;width:6px;height:1px;background:#ececec;"></div>
<div class="a" style="left:849px;top:288px;width:6px;height:1px;background:#ececec;"></div>
<div class="a" style="left:849px;top:299px;width:6px;height:1px;background:#ececec;"></div>
<div class="a" style="left:849px;top:310px;width:6px;height:1px;background:#ececec;"></div>
<div class="a" style="left:847px;top:428px;width:10px;height:8px;background:#f0f0f0;"></div>
<svg class="a" style="left:851px;top:430px;" width="3" height="5" viewBox="0 0 3 5"><path d="M2.5 0.5 L0.6 2.5 L2.5 4.5" stroke="#999" stroke-width="0.9" fill="none"/></svg>
<div class="a" style="left:287px;top:466.6px;width:570px;height:1.2px;background:#c4c4c4;"></div>
<div class="m" style="left:290.3px;top:469.30px;color:#e02a2a">(51) d9 (/64): 0x0000000000000000</div>
<div class="m" style="left:290.3px;top:478.27px;color:#e02a2a">(52) d10 (/64): 0x0000000000000000</div>
<div class="m" style="left:290.3px;top:487.24px;color:#e02a2a">(53) d11 (/64): 0x0000000000000000</div>
<div class="m" style="left:290.3px;top:496.21px;color:#e02a2a">(54) d12 (/64): 0x0000000000000000</div>
<div class="m" style="left:290.3px;top:505.18px;color:#e02a2a">(55) d13 (/64): 0x0000000000000000</div>
<div class="m" style="left:290.3px;top:514.15px;color:#e02a2a">(56) d14 (/64): 0x0000000000000000</div>
<div class="m" style="left:290.3px;top:523.12px;color:#e02a2a">(57) d15 (/64): 0x0000000000000000</div>
<div class="m" style="left:290.3px;top:532.09px;color:#e02a2a">(58) fpscr (/32): 0x00000000</div>
<div class="m" style="left:290.3px;top:541.06px;color:#e02a2a">===== Cortex-M DWT registers</div>
<div class="t" style="left:87.10px;top:5.00px;font-size:8px;color:#1e1e1e;font-weight:normal;transform:scaleX(0.865);">Debug</div>
<div class="t" style="left:179.40px;top:5.00px;font-size:8px;color:#1e1e1e;font-weight:normal;transform:scaleX(0.904);">hello_world</div>
<div class="t" style="left:13.10px;top:24.20px;font-size:8px;color:#202020;font-weight:normal;transform:scaleX(0.865);">Debug</div>
<div class="t" style="left:63.70px;top:24.20px;font-size:8px;color:#9a9a9a;font-weight:normal;transform:scaleX(0.864);">Project Explorer</div>
<div class="t" style="left:24.10px;top:37.30px;font-size:8px;color:#101010;font-weight:normal;transform:scaleX(0.880);">hello_world [GDB OpenOCD Debugging]</div>
<div class="t" style="left:33.50px;top:48.05px;font-size:8px;color:#101010;font-weight:normal;transform:scaleX(0.898);">hello_world.elf</div>
<div class="t" style="left:43.20px;top:58.80px;font-size:8px;color:#101010;font-weight:normal;transform:scaleX(0.860);">Thread #1 (Suspended : Breakpoint)</div>
<div class="t" style="left:52.60px;top:69.55px;font-size:8px;color:#101010;font-weight:normal;transform:scaleX(0.858);">main() at main.c:62 0x100001c4</div>
<div class="t" style="left:33.50px;top:80.30px;font-size:8px;color:#101010;font-weight:normal;transform:scaleX(0.886);">openocd</div>
<div class="t" style="left:33.50px;top:91.05px;font-size:8px;color:#101010;font-weight:normal;transform:scaleX(0.923);">arm-none-eabi-gdb</div>
<div class="t" style="left:301.30px;top:24.20px;font-size:8px;color:#8c8c8c;font-weight:normal;transform:scaleX(0.895);">main.c</div>
<div class="t" style="left:352.60px;top:24.20px;font-size:8px;color:#1e1e1e;font-weight:normal;transform:scaleX(0.866);">main.c</div>
<div class="t" style="left:301.50px;top:444.80px;font-size:8px;color:#1e1e1e;font-weight:normal;transform:scaleX(0.865);">Console</div>
<div class="t" style="left:356.90px;top:444.80px;font-size:8px;color:#9a9a9a;font-weight:normal;transform:scaleX(0.831);">Registers</div>
<div class="t" style="left:403.70px;top:444.80px;font-size:8px;color:#9a9a9a;font-weight:normal;transform:scaleX(0.864);">Problems</div>
<div class="t" style="left:451.30px;top:444.80px;font-size:8px;color:#9a9a9a;font-weight:normal;transform:scaleX(0.837);">Executables</div>
<div class="t" style="left:506.60px;top:444.80px;font-size:8px;color:#9a9a9a;font-weight:normal;transform:scaleX(0.868);">Debugger Console</div>
<div class="t" style="left:582.60px;top:444.80px;font-size:8px;color:#9a9a9a;font-weight:normal;transform:scaleX(0.917);">Memory</div>
<div class="t" style="left:289.30px;top:457.90px;font-size:8px;color:#111;font-weight:normal;transform:scaleX(0.884);">hello_world [GDB OpenOCD Debugging] openocd</div>
</body></html>
